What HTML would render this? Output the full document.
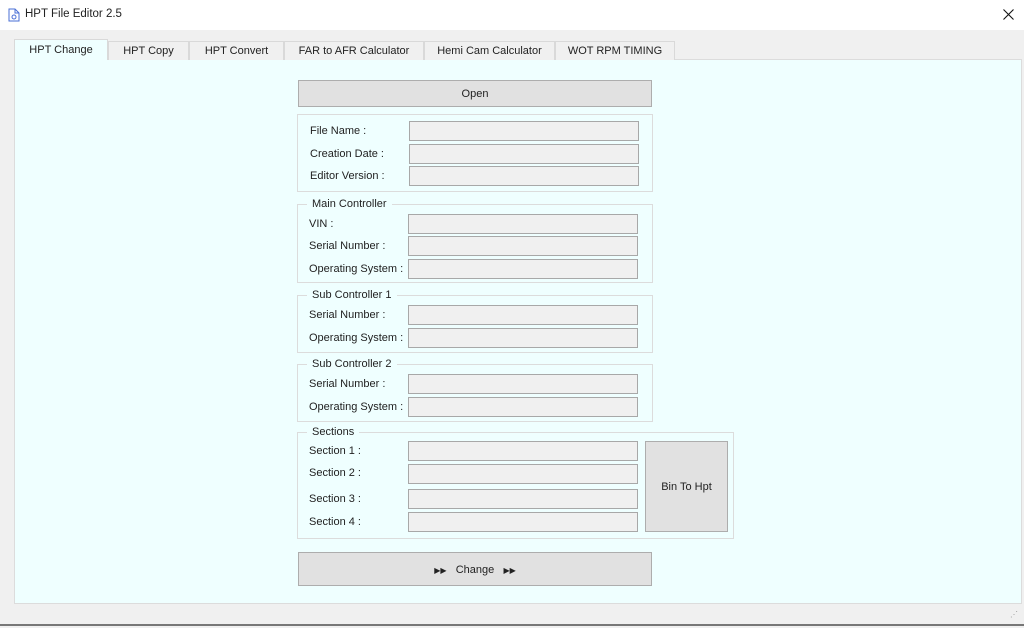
<!DOCTYPE html>
<html><head><style>
*{box-sizing:border-box;margin:0;padding:0}
body{width:1024px;height:628px;position:relative;background:#f0f0f0;font-family:"Liberation Sans",sans-serif;font-size:11px;color:#222;overflow:hidden}
.a{position:absolute}
.title{left:0;top:0;width:1024px;height:30px;background:#fff}
.tab{position:absolute;top:41px;height:19px;border:1px solid #d9d9d9;border-bottom:none;background:#f0f0f0;text-align:center;line-height:19px}
.panel{left:14px;top:59px;width:1008px;height:545px;background:#efffff;border:1px solid #dcdcdc}
.btn{position:absolute;background:#e1e1e1;border:1px solid #adadad;text-align:center}
.in{position:absolute;height:20px;background:#f0f0f0;border:1px solid #a8a8a8;width:230px}
.grp{position:absolute;border:1px solid #dcdcdc}
.lg{position:absolute;background:#efffff;padding:0 5px;top:-8px;left:9px;line-height:14px}
.lb{position:absolute;line-height:14px}
</style></head><body>
<div class="a title">
<svg class="a" style="left:8px;top:8px" width="12" height="14" viewBox="0 0 12 14"><path d="M1 1h6l4 4v8H1z" fill="none" stroke="#4a6fd6"/><path d="M7 1v4h4" fill="none" stroke="#4a6fd6"/><circle cx="6" cy="9" r="2" fill="none" stroke="#4a6fd6"/></svg>
<div class="a" style="left:25px;top:8px;font-size:11.5px">HPT File Editor 2.5</div>
<svg class="a" style="left:1003px;top:9px" width="11" height="11" viewBox="0 0 11 11"><path d="M0.5 0.5L10.5 10.5M10.5 0.5L0.5 10.5" stroke="#111" stroke-width="1.1"/></svg>
</div>
<div class="a panel"></div>
<div class="tab" style="left:14px;top:39px;width:94px;height:21px;line-height:21px;background:#efffff;z-index:2">HPT Change</div>
<div class="tab" style="left:108px;width:81px">HPT Copy</div>
<div class="tab" style="left:189px;width:95px">HPT Convert</div>
<div class="tab" style="left:284px;width:140px">FAR to AFR Calculator</div>
<div class="tab" style="left:424px;width:131px">Hemi Cam Calculator</div>
<div class="tab" style="left:555px;width:120px">WOT RPM TIMING</div>

<div class="btn" style="left:298px;top:80px;width:354px;height:27px;line-height:27px">Open</div>

<div class="grp" style="left:297px;top:114px;width:356px;height:78px"></div>
<div class="lb" style="left:310px;top:124px">File Name :</div><div class="in" style="left:409px;top:121px"></div>
<div class="lb" style="left:310px;top:147px">Creation Date :</div><div class="in" style="left:409px;top:144px"></div>
<div class="lb" style="left:310px;top:169px">Editor Version :</div><div class="in" style="left:409px;top:166px"></div>

<div class="grp" style="left:297px;top:204px;width:356px;height:79px"><div class="lg">Main Controller</div></div>
<div class="lb" style="left:309px;top:217px">VIN :</div><div class="in" style="left:408px;top:214px"></div>
<div class="lb" style="left:309px;top:239px">Serial Number :</div><div class="in" style="left:408px;top:236px"></div>
<div class="lb" style="left:309px;top:262px">Operating System :</div><div class="in" style="left:408px;top:259px"></div>

<div class="grp" style="left:297px;top:295px;width:356px;height:58px"><div class="lg">Sub Controller 1</div></div>
<div class="lb" style="left:309px;top:308px">Serial Number :</div><div class="in" style="left:408px;top:305px"></div>
<div class="lb" style="left:309px;top:331px">Operating System :</div><div class="in" style="left:408px;top:328px"></div>

<div class="grp" style="left:297px;top:364px;width:356px;height:58px"><div class="lg">Sub Controller 2</div></div>
<div class="lb" style="left:309px;top:377px">Serial Number :</div><div class="in" style="left:408px;top:374px"></div>
<div class="lb" style="left:309px;top:400px">Operating System :</div><div class="in" style="left:408px;top:397px"></div>

<div class="grp" style="left:297px;top:432px;width:437px;height:107px"><div class="lg">Sections</div></div>
<div class="lb" style="left:309px;top:444px">Section 1 :</div><div class="in" style="left:408px;top:441px"></div>
<div class="lb" style="left:309px;top:466px">Section 2 :</div><div class="in" style="left:408px;top:464px"></div>
<div class="lb" style="left:309px;top:492px">Section 3 :</div><div class="in" style="left:408px;top:489px"></div>
<div class="lb" style="left:309px;top:515px">Section 4 :</div><div class="in" style="left:408px;top:512px"></div>
<div class="btn" style="left:645px;top:441px;width:83px;height:91px;line-height:91px">Bin To Hpt</div>

<div class="btn" style="left:298px;top:552px;width:354px;height:34px;line-height:34px"><span style="font-size:8px">&#9654;&#9654;</span>&nbsp;&nbsp; Change &nbsp;&nbsp;<span style="font-size:8px">&#9654;&#9654;</span></div>

<div class="a" style="left:0;top:624px;width:1024px;height:2px;background:#777"></div>
<div class="a" style="left:1010px;top:610px;font-size:8px;color:#999">⋰</div>
</body></html>
